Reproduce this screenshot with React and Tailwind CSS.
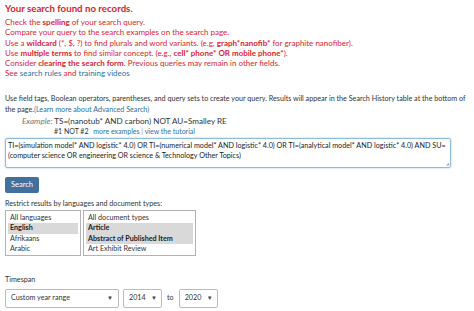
export default function App() {
  return (
    <div className="h-[311px] w-[474px] overflow-hidden bg-white px-[5px] pt-[2px] text-[7.2px] leading-[10.4px] text-[#333] [font-family:Lato,'Liberation_Sans',sans-serif]">
      <div className="text-[9.7px] font-bold leading-[12px] text-[#d9232e]">Your search found no records.</div>

      <div className="mt-[3px] text-[8px] leading-[10.3px] text-[#e0242f]">
        <div>Check the <b>spelling</b> of your search query.</div>
        <div>Compare your query to the search examples on the search page.</div>
        <div>
          Use a <b>wildcard</b> (*, $, ?) to find plurals and word variants. (e.g, <b>graph*nanofib*</b> for graphite
          nanofiber).
        </div>
        <div>
          Use <b>multiple terms</b> to find similar concept. (e.g., <b>cell* phone* OR mobile phone*</b>).
        </div>
        <div>
          Consider <b>clearing the search form</b>. Previous queries may remain in other fields.
        </div>
        <div>
          See <span className="text-[#2e6f9e]">search rules</span> and{" "}
          <span className="text-[#2e6f9e]">training videos</span>
        </div>
      </div>

      <div className="mt-[14px] whitespace-nowrap leading-[11px]">
        <div>
          Use field tags, Boolean operators, parentheses, and query sets to create your query. Results will appear in the
          Search History table at the bottom of
        </div>
        <div>
          the page.<span className="text-[#2e6f9e]">(Learn more about Advanced Search)</span>
        </div>
      </div>

      <div className="ml-[17px] mt-[1px] leading-[10.5px]">
        <div className="text-[8.1px]">
          <i className="text-[#777]">Example:</i> TS=(nanotub* AND carbon) NOT AU=Smalley RE
        </div>
        <div className="ml-[32px] text-[7px]">
          #1 NOT #2 <span className="ml-[3px] text-[#2e6f9e]">more examples</span>
          <span className="text-[#999]"> | </span>
          <span className="text-[#2e6f9e]">view the tutorial</span>
        </div>
      </div>

      <div className="relative mt-[1px] h-[30px] w-[446px] whitespace-nowrap rounded-[2px] border border-[#8fbcd8] px-[2px] pt-[2px] leading-[10.5px] text-[#222] shadow-[0_0_2px_#9cc6e3]">
        <div>
          TI=(simulation model* AND logistic* 4.0) OR TI=(numerical model* AND logistic* 4.0) OR TI=(analytical model* AND
          logistic* 4.0) AND SU=
        </div>
        <div>(computer science OR engineering OR science &amp; Technology Other Topics)</div>
        <span className="absolute bottom-[1px] right-[1px] text-[4px] leading-none text-[#aaa]">◢</span>
      </div>

      <button className="mt-[9px] h-[16px] w-[34px] rounded-[2px] bg-[#41709f] text-[7.5px] leading-[16px] text-white">
        Search
      </button>

      <div className="mt-[6px]">Restrict results by languages and document types:</div>

      <div className="mt-[1px] flex gap-[2px]">
        <div className="h-[46px] w-[76px] border border-[#b3b3b3] p-[2px] leading-[10.3px]">
          <div className="px-[2px]">All languages</div>
          <div className="bg-[#d9d9d9] px-[2px] font-bold text-[#222]">English</div>
          <div className="px-[2px]">Afrikaans</div>
          <div className="px-[2px]">Arabic</div>
        </div>
        <div className="h-[46px] w-[113px] border border-[#b3b3b3] p-[2px] leading-[10.3px]">
          <div className="px-[2px]">All document types</div>
          <div className="bg-[#d9d9d9] px-[2px] font-bold text-[#222]">Article</div>
          <div className="bg-[#d9d9d9] px-[2px] font-bold text-[#222]">Abstract of Published Item</div>
          <div className="px-[2px]">Art Exhibit Review</div>
        </div>
      </div>

      <div className="mt-[19px]">Timespan</div>

      <div className="mt-[3px] flex items-center">
        <div className="flex h-[19px] w-[114px] items-center justify-between rounded-[2px] border border-[#bbb] pl-[5px] pr-[5px]">
          <span>Custom year range</span>
          <span className="text-[6px] text-[#444]">▼</span>
        </div>
        <div className="ml-[4px] flex h-[19px] w-[39px] items-center justify-between rounded-[2px] border border-[#bbb] pl-[5px] pr-[4px]">
          <span>2014</span>
          <span className="text-[6px] text-[#444]">▼</span>
        </div>
        <span className="mx-[5px]">to</span>
        <div className="flex h-[19px] w-[39px] items-center justify-between rounded-[2px] border border-[#bbb] pl-[5px] pr-[4px]">
          <span>2020</span>
          <span className="text-[6px] text-[#444]">▼</span>
        </div>
      </div>
    </div>
  );
}
